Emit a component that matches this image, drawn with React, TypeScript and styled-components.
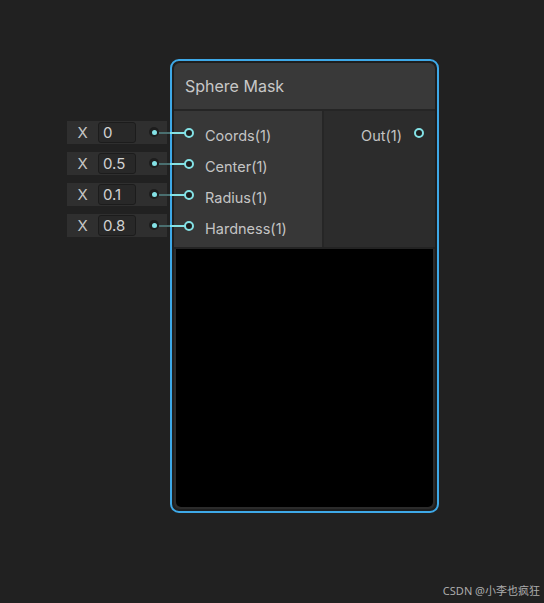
import React from "react";
import styled, { createGlobalStyle } from "styled-components";

const Global = createGlobalStyle`
  html, body { margin: 0; padding: 0; background: #212121; }
  body { font-family: Inter, "Noto Sans", sans-serif; }
  #root { height: 603px; }
`;

const Canvas = styled.div`
  position: relative;
  width: 544px;
  height: 603px;
  background: #212121;
  overflow: hidden;
`;

const NodeFrame = styled.div`
  position: absolute;
  left: 170px;
  top: 59px;
  width: 261px;
  border: 2px solid #3ea9e8;
  border-radius: 9px;
  padding: 2px;
  background: #1e1e1e;
`;

const NodeInner = styled.div`
  display: flex;
  flex-direction: column;
  background: #2b2b2b;
  border-radius: 6px;
`;

const Header = styled.div`
  height: 46px;
  display: flex;
  align-items: center;
  padding-left: 11px;
  background: #393939;
  border-radius: 6px 6px 0 0;
  border-bottom: 2px solid #252525;
  color: #c8c8c8;
  font-size: 16px;
`;

const Body = styled.div`
  display: flex;
  height: 136px;
  border-bottom: 2px solid #232323;
`;

const InputCol = styled.div`
  width: 150px;
  box-sizing: border-box;
  padding-top: 6px;
  background: #373737;
  border-right: 2px solid #262626;
`;

const OutputCol = styled.div`
  flex: 1;
  padding-top: 6px;
  background: #2c2c2c;
`;

const PortRow = styled.div<{ $out?: boolean }>`
  position: relative;
  height: 31px;
  display: flex;
  align-items: center;
  justify-content: ${(p) => (p.$out ? "flex-end" : "flex-start")};
`;

const Port = styled.div<{ $out?: boolean }>`
  width: 10px;
  height: 10px;
  box-sizing: border-box;
  border: 2px solid #84e2e6;
  border-radius: 50%;
  background: #1e1e1e;
  margin: ${(p) => (p.$out ? "0 11px 0 12px" : "0 11px 0 10px")};
  position: relative;
  z-index: 2;
`;

const Label = styled.span`
  color: #c4c4c4;
  font-size: 14.5px;
  margin-top: 5px;
  white-space: nowrap;
`;

const Wire = styled.div`
  position: absolute;
  left: -15px;
  top: 50%;
  width: 27px;
  height: 2px;
  margin-top: -1px;
  background: linear-gradient(to right, #4a6f70 0, #4a6f70 11px, #84e2e6 11px, #84e2e6 100%);
  z-index: 1;
`;

const InlineField = styled.div`
  position: absolute;
  right: calc(100% + 7px);
  top: 50%;
  margin-top: -12px;
  width: 100px;
  height: 23px;
  display: flex;
  align-items: center;
  background: #2f2f2f;
`;

const AxisLabel = styled.span`
  width: 31px;
  text-align: center;
  color: #c4c4c4;
  font-size: 15px;
`;

const ValueBox = styled.div`
  width: 38px;
  height: 21px;
  box-sizing: border-box;
  display: flex;
  align-items: center;
  padding-left: 4px;
  background: #282828;
  border: 1px solid #1c1c1c;
  border-radius: 3px;
  color: #d2d2d2;
  font-size: 15px;
`;

const Spacer = styled.div`
  flex: 1;
`;

const Dot = styled.div`
  width: 10px;
  height: 10px;
  margin-right: 8px;
  border-radius: 50%;
  background: #1d1d1d;
  display: flex;
  align-items: center;
  justify-content: center;
  &::after {
    content: "";
    width: 5px;
    height: 5px;
    border-radius: 50%;
    background: #84e2e6;
  }
`;

const Preview = styled.div`
  height: 258px;
  margin: 0 2px 2px 2px;
  background: #000;
  border-radius: 0 0 5px 5px;
`;

const Watermark = styled.div`
  position: absolute;
  right: 4px;
  bottom: 5px;
  font-family: "Noto Sans", "Noto Sans CJK SC", sans-serif;
  font-size: 11px;
  color: #ababab;
`;

const inputs = [
  { name: "Coords(1)", value: "0" },
  { name: "Center(1)", value: "0.5" },
  { name: "Radius(1)", value: "0.1" },
  { name: "Hardness(1)", value: "0.8" },
];

export default function App() {
  return (
    <Canvas>
      <Global />
      <NodeFrame>
        <NodeInner>
          <Header>Sphere Mask</Header>
          <Body>
            <InputCol>
              {inputs.map((inp) => (
                <PortRow key={inp.name}>
                  <InlineField>
                    <AxisLabel>X</AxisLabel>
                    <ValueBox>{inp.value}</ValueBox>
                    <Spacer />
                    <Dot />
                  </InlineField>
                  <Wire />
                  <Port />
                  <Label>{inp.name}</Label>
                </PortRow>
              ))}
            </InputCol>
            <OutputCol>
              <PortRow $out>
                <Label>Out(1)</Label>
                <Port $out />
              </PortRow>
            </OutputCol>
          </Body>
          <Preview />
        </NodeInner>
      </NodeFrame>
      <Watermark>CSDN @小李也疯狂</Watermark>
    </Canvas>
  );
}
